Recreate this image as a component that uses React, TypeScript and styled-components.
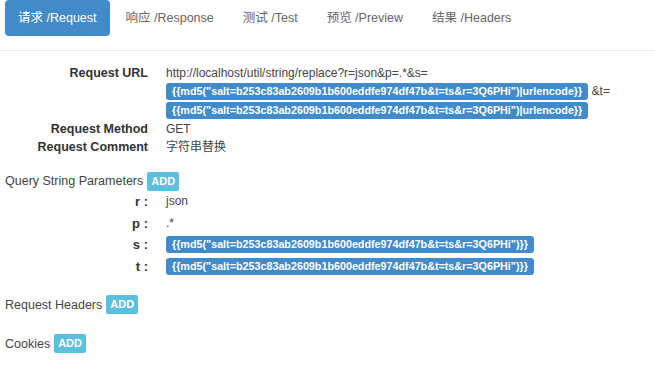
import React from "react";
import styled, { createGlobalStyle } from "styled-components";

const GlobalStyle = createGlobalStyle`
  body {
    margin: 0;
    background: #fff;
    font-family: "Liberation Sans", Arial, "Noto Sans CJK SC", sans-serif;
    font-size: 12px;
    color: #333;
  }
`;

const Page = styled.div`
  width: 655px;
  height: 365px;
  overflow: hidden;
`;

const Nav = styled.ul`
  display: flex;
  list-style: none;
  margin: 0;
  padding: 0 0 0 5px;
  height: 50px;
  border-bottom: 1px solid #eee;
`;

const Tab = styled.li<{ active?: boolean }>`
  height: 36px;
  line-height: 36px;
  padding: 0 13px;
  margin-right: 3px;
  border-radius: 4px;
  font-size: 12.5px;
  color: ${(p) => (p.active ? "#fff" : "#666")};
  background: ${(p) => (p.active ? "#428bca" : "transparent")};
`;

const Details = styled.div`
  display: grid;
  grid-template-columns: 148px 1fr;
  column-gap: 18px;
  margin-top: 13px;
  line-height: 18px;
`;

const Label = styled.div`
  text-align: right;
  font-weight: bold;
  font-size: 12.5px;
  color: #333;
`;

const Value = styled.div`
  color: #444;
`;

const Badge = styled.span`
  display: inline-block;
  background: #428bca;
  color: #fff;
  font-weight: bold;
  font-size: 10.75px;
  line-height: 1;
  padding: 3px 6px;
  border-radius: 3px;
  white-space: nowrap;
  margin: 1px 0;
`;

const Section = styled.div<{ top: number }>`
  display: flex;
  align-items: center;
  gap: 4px;
  height: 19px;
  margin: ${(p) => p.top}px 0 0 5px;
  font-size: 12.5px;
  color: #444;
`;

const AddButton = styled.span`
  display: inline-block;
  background: #5bc0de;
  color: #fff;
  font-weight: bold;
  font-size: 11px;
  line-height: 19px;
  padding: 0 4px;
  border-radius: 2px;
`;

const Params = styled.div`
  display: grid;
  grid-template-columns: 148px 1fr;
  column-gap: 18px;
  grid-auto-rows: 21.7px;
  align-items: center;
`;

const ParamKey = styled.div`
  text-align: right;
  font-weight: bold;
  font-size: 13px;
  color: #333;
`;

const md5 = '{{md5("salt=b253c83ab2609b1b600eddfe974df47b&t=ts&r=3Q6PHi")';

const tabs = ["请求 /Request", "响应 /Response", "测试 /Test", "预览 /Preview", "结果 /Headers"];

export default function App() {
  return (
    <Page>
      <GlobalStyle />
      <Nav>
        {tabs.map((t, i) => (
          <Tab key={t} active={i === 0}>{t}</Tab>
        ))}
      </Nav>

      <Details>
        <Label>Request URL</Label>
        <Value>
          http://localhost/util/string/replace?r=json&amp;p=.*&amp;s=
          <br />
          <Badge>{md5 + "|urlencode}}"}</Badge> &amp;t=
          <br />
          <Badge>{md5 + "|urlencode}}"}</Badge>
        </Value>
        <Label>Request Method</Label>
        <Value>GET</Value>
        <Label>Request Comment</Label>
        <Value>字符串替换</Value>
      </Details>

      <Section top={16}>
        Query String Parameters<AddButton>ADD</AddButton>
      </Section>
      <Params>
        <ParamKey>r :</ParamKey>
        <Value>json</Value>
        <ParamKey>p :</ParamKey>
        <Value>.*</Value>
        <ParamKey>s :</ParamKey>
        <div><Badge>{md5 + "}}"}</Badge></div>
        <ParamKey>t :</ParamKey>
        <div><Badge>{md5 + "}}"}</Badge></div>
      </Params>

      <Section top={18}>
        Request Headers<AddButton>ADD</AddButton>
      </Section>
      <Section top={20}>
        Cookies<AddButton>ADD</AddButton>
      </Section>
    </Page>
  );
}
